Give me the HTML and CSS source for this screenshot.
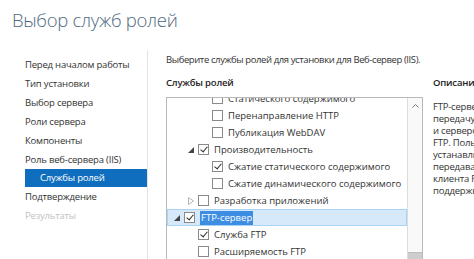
FILE: index.html
```html
<!DOCTYPE html>
<html>
<head>
    <title>Выбор служб ролей</title>
    <link rel="stylesheet" href="styles.css">
</head>
<body>
    <div class="wizard">
        <h1 class="title">Выбор служб ролей</h1>
        <div class="main">
            <!-- Wizard steps -->
            <ul class="steps">
                <li>Перед началом работы</li>
                <li>Тип установки</li>
                <li>Выбор сервера</li>
                <li>Роли сервера</li>
                <li>Компоненты</li>
                <li>Роль веб-сервера (IIS)</li>
                <li class="sub active">Службы ролей</li>
                <li>Подтверждение</li>
                <li class="disabled">Результаты</li>
            </ul>

            <div class="content">
                <p class="intro">Выберите службы ролей для установки для Веб-сервер (IIS).</p>
                <div class="columns">
                    <div class="services">
                        <h2>Службы ролей</h2>
                        <div class="listbox">
                            <div class="tree">
                                <div class="row lvl2"><span class="cb"></span>Статического содержимого</div>
                                <div class="row lvl2"><span class="cb"></span>Перенаправление HTTP</div>
                                <div class="row lvl2"><span class="cb"></span>Публикация WebDAV</div>
                                <div class="row lvl1">
                                    <span class="arrow"><svg width="6" height="6" viewBox="0 0 6 6"><path d="M6 0V6H0Z" fill="#444"/></svg></span>
                                    <span class="cb checked"></span>Производительность
                                </div>
                                <div class="row lvl2"><span class="cb checked"></span>Сжатие статического содержимого</div>
                                <div class="row lvl2"><span class="cb"></span>Сжатие динамического содержимого</div>
                                <div class="row lvl1">
                                    <span class="arrow"><svg width="6" height="8" viewBox="0 0 6 8"><path d="M0.5 0.5L5.5 4L0.5 7.5Z" fill="none" stroke="#b5b5b5"/></svg></span>
                                    <span class="cb"></span>Разработка приложений
                                </div>
                                <div class="row lvl0 selected">
                                    <span class="arrow"><svg width="6" height="6" viewBox="0 0 6 6"><path d="M6 0V6H0Z" fill="#444"/></svg></span>
                                    <span class="cb checked"></span><span class="sel-text">FTP-сервер</span>
                                </div>
                                <div class="row lvl1 noarrow"><span class="cb checked"></span>Служба FTP</div>
                                <div class="row lvl1 noarrow"><span class="cb"></span>Расширяемость FTP</div>
                            </div>
                            <div class="scrollbar">
                                <span class="up"><svg width="7" height="4" viewBox="0 0 7 4"><path d="M0.5 3.5L3.5 0.5L6.5 3.5" fill="none" stroke="#777"/></svg></span>
                                <span class="thumb"></span>
                            </div>
                        </div>
                    </div>
                    <div class="description">
                        <h2>Описание</h2>
                        <p>FTP-сервер обеспечивает<br>
                        передачу файлов между клиентом<br>
                        и сервером по протоколу<br>
                        FTP. Пользователи могут<br>
                        устанавливать FTP-соединения и<br>
                        передавать файлы с помощью<br>
                        клиента FTP или веб-обозревателя с<br>
                        поддержкой FTP.</p>
                    </div>
                </div>
            </div>
        </div>
    </div>
</body>
</html>
```

FILE: styles.css
```css
body {
    margin: 0;
    padding: 0;
    background-color: #ffffff;
    font-family: "Open Sans", "Noto Sans", sans-serif;
    font-size: 9.5px;
    color: #333333;
    letter-spacing: -0.2px;
}
.wizard {
    width: 474px;
    height: 259px;
    overflow: hidden;
}
.title {
    margin: 0;
    height: 50px;
    padding: 6px 0 0 12px;
    box-sizing: border-box;
    font-size: 18.5px;
    font-weight: 300;
    line-height: 28px;
    color: #4f6a7e;
    letter-spacing: -0.3px;
}
.main {
    display: flex;
    height: 209px;
}
.steps {
    list-style: none;
    margin: 0;
    padding: 5px 0 0 25px;
    width: 122px;
    border-right: 1px solid #e3e3e3;
    flex-shrink: 0;
}
.steps li {
    height: 19px;
    line-height: 19px;
    white-space: nowrap;
}
.steps li.sub {
    padding-left: 15px;
}
.steps li.active {
    background-color: #106ebe;
    color: #ffffff;
    height: 18px;
    line-height: 18px;
}
.steps li.disabled {
    color: #c2c2c2;
}
.content {
    flex: 1;
    padding: 2px 0 0 18px;
    min-width: 0;
}
.intro {
    margin: 0 0 7px 0;
    line-height: 16px;
    white-space: nowrap;
    letter-spacing: -0.4px;
}
.columns {
    display: flex;
    gap: 10px;
}
h2 {
    margin: 0 0 6px 0;
    font-size: 9.5px;
    font-weight: 600;
    line-height: 16px;
    color: #1e1e1e;
}
.services {
    width: 257px;
    flex-shrink: 0;
}
.listbox {
    display: flex;
    height: 170px;
    border: 1px solid #b9b9b9;
    border-right: none;
    box-sizing: border-box;
    overflow: hidden;
}
.tree {
    flex: 1;
    margin-top: -8px;
    min-width: 0;
    letter-spacing: 0;
}
.row {
    display: flex;
    align-items: center;
    height: 17px;
    white-space: nowrap;
    box-sizing: border-box;
}
.row.lvl0 {
    padding-left: 3px;
}
.row.lvl1 {
    padding-left: 17px;
}
.row.lvl1.noarrow {
    padding-left: 31px;
}
.row.lvl2 {
    padding-left: 45px;
}
.row.selected {
    background-color: #d5e9fa;
    border: 1px solid #a9d3f5;
    padding-left: 2px;
}
.arrow {
    width: 14px;
    display: flex;
    justify-content: center;
    align-items: center;
}
.cb {
    width: 11px;
    height: 11px;
    border: 1px solid #8a8a8a;
    box-sizing: border-box;
    background-color: #ffffff;
    margin-right: 5px;
    position: relative;
    flex-shrink: 0;
}
.cb.checked::after {
    content: "";
    position: absolute;
    left: 3px;
    top: 0px;
    width: 3px;
    height: 6px;
    border: solid #2a2a2a;
    border-width: 0 1.5px 1.5px 0;
    transform: rotate(40deg);
}
.sel-text {
    background-color: #3d8ee3;
    color: #ffffff;
    padding: 0 1px;
    line-height: 14px;
}
.scrollbar {
    width: 14px;
    border-left: 1px solid #dcdcdc;
    border-right: 1px solid #b9b9b9;
    background-color: #f9f9f9;
    display: flex;
    flex-direction: column;
    justify-content: space-between;
    flex-shrink: 0;
}
.up {
    height: 16px;
    display: flex;
    justify-content: center;
    align-items: center;
}
.thumb {
    height: 13px;
    background-color: #cdcdcd;
    border-top: 1px solid #bdbdbd;
}
.description p {
    margin: 0;
    line-height: 12px;
    white-space: nowrap;
    padding-top: 4px;
}
```
